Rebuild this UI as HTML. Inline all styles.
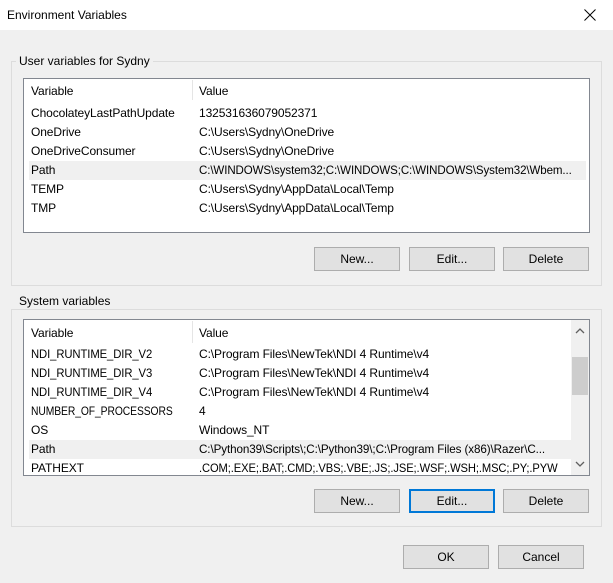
<!DOCTYPE html>
<html><head><style>
*{margin:0;padding:0;box-sizing:border-box}
body{width:613px;height:583px;background:#f0f0f0;font-family:"Liberation Sans",sans-serif;font-size:12px;color:#000;position:relative;overflow:hidden}
.a{position:absolute}
.title{left:0;top:0;width:613px;height:30px;background:#fff}
.grp{border:1px solid #dcdcdc}
.lbl{background:#f0f0f0;padding:0 3px;line-height:16px}
.list{background:#fff;border:1px solid #828790;overflow:hidden}
.r{position:absolute;left:0;height:19px;line-height:19px;white-space:nowrap;letter-spacing:-0.1px}
.r span{position:absolute}
.btn{background:#e1e1e1;border:1px solid #adadad;text-align:center;line-height:22px}
.hl{background:#f0f0f0}
.div{position:absolute;width:1px;background:#e5e5e5}
.sq{display:inline-block;transform-origin:0 50%}
</style></head><body>
<div class="a title"></div>
<div class="a" style="left:7px;top:7px;line-height:16px">Environment Variables</div>
<svg class="a" style="left:584px;top:9px" width="12" height="12"><path d="M0.5 0.5L11.5 11.5M11.5 0.5L0.5 11.5" stroke="#000" stroke-width="1"/></svg>

<div class="a grp" style="left:11px;top:61px;width:591px;height:225px"></div>
<div class="a lbl" style="left:16px;top:53px">User variables for Sydny</div>
<div class="a list" style="left:23px;top:78px;width:567px;height:155px">
 <div class="div" style="left:168px;top:1px;height:20px"></div>
 <div class="r" style="top:3px;width:565px"><span style="left:7px">Variable</span><span style="left:175px">Value</span></div>
 <div class="r" style="top:25px;width:565px"><span style="left:7px">ChocolateyLastPathUpdate</span><span style="left:175px">132531636079052371</span></div>
 <div class="r" style="top:44px;width:565px"><span style="left:7px">OneDrive</span><span style="left:175px">C:\Users\Sydny\OneDrive</span></div>
 <div class="r" style="top:63px;width:565px"><span style="left:7px">OneDriveConsumer</span><span style="left:175px">C:\Users\Sydny\OneDrive</span></div>
 <div class="r hl" style="top:82px;left:5px;width:557px"><span style="left:2px">Path</span><span style="left:170px;width:386px;overflow:hidden"><span class="sq" style="position:static;transform:scaleX(0.96)">C:\WINDOWS\system32;C:\WINDOWS;C:\WINDOWS\System32\Wbem...</span></span></div>
 <div class="r" style="top:101px;width:565px"><span style="left:7px">TEMP</span><span style="left:175px">C:\Users\Sydny\AppData\Local\Temp</span></div>
 <div class="r" style="top:120px;width:565px"><span style="left:7px">TMP</span><span style="left:175px">C:\Users\Sydny\AppData\Local\Temp</span></div>
</div>
<div class="a btn" style="left:314px;top:247px;width:86px;height:24px">New...</div>
<div class="a btn" style="left:409px;top:247px;width:86px;height:24px">Edit...</div>
<div class="a btn" style="left:503px;top:247px;width:86px;height:24px">Delete</div>

<div class="a grp" style="left:11px;top:309px;width:591px;height:218px"></div>
<div class="a lbl" style="left:16px;top:293px">System variables</div>
<div class="a list" style="left:23px;top:319px;width:567px;height:157px">
 <div class="div" style="left:168px;top:1px;height:22px"></div>
 <div class="r" style="top:4px;width:546px"><span style="left:7px">Variable</span><span style="left:175px">Value</span></div>
 <div class="r" style="top:25px;width:546px"><span style="left:7px"><span class="sq" style="position:static;transform:scaleX(0.94)">NDI_RUNTIME_DIR_V2</span></span><span style="left:175px">C:\Program Files\NewTek\NDI 4 Runtime\v4</span></div>
 <div class="r" style="top:44px;width:546px"><span style="left:7px"><span class="sq" style="position:static;transform:scaleX(0.94)">NDI_RUNTIME_DIR_V3</span></span><span style="left:175px">C:\Program Files\NewTek\NDI 4 Runtime\v4</span></div>
 <div class="r" style="top:63px;width:546px"><span style="left:7px"><span class="sq" style="position:static;transform:scaleX(0.94)">NDI_RUNTIME_DIR_V4</span></span><span style="left:175px">C:\Program Files\NewTek\NDI 4 Runtime\v4</span></div>
 <div class="r" style="top:82px;width:546px"><span style="left:7px"><span class="sq" style="position:static;transform:scaleX(0.86)">NUMBER_OF_PROCESSORS</span></span><span style="left:175px">4</span></div>
 <div class="r" style="top:101px;width:546px"><span style="left:7px">OS</span><span style="left:175px">Windows_NT</span></div>
 <div class="r hl" style="top:120px;left:5px;width:542px"><span style="left:2px">Path</span><span style="left:170px;width:370px;overflow:hidden"><span class="sq" style="position:static;transform:scaleX(0.97)">C:\Python39\Scripts\;C:\Python39\;C:\Program Files (x86)\Razer\C...</span></span></div>
 <div class="r" style="top:139px;width:546px"><span style="left:175px;width:370px;overflow:hidden"><span class="sq" style="position:static;transform:scaleX(0.93)">.COM;.EXE;.BAT;.CMD;.VBS;.VBE;.JS;.JSE;.WSF;.WSH;.MSC;.PY;.PYW</span></span><span style="left:7px">PATHEXT</span></div>
 <div class="a" style="left:547px;top:0;width:18px;height:155px;background:#f0f0f0"></div>
 <div class="a" style="left:548px;top:37px;width:16px;height:38px;background:#cdcdcd"></div>
 <svg class="a" style="left:551px;top:8px" width="10" height="6"><path d="M1 5L5 1L9 5" stroke="#606060" stroke-width="1.3" fill="none"/></svg>
 <svg class="a" style="left:551px;top:141px" width="10" height="6"><path d="M1 1L5 5L9 1" stroke="#606060" stroke-width="1.3" fill="none"/></svg>
</div>
<div class="a btn" style="left:314px;top:489px;width:86px;height:24px">New...</div>
<div class="a btn" style="left:409px;top:489px;width:86px;height:24px;border:2px solid #0078d7;line-height:20px">Edit...</div>
<div class="a btn" style="left:503px;top:489px;width:86px;height:24px">Delete</div>

<div class="a btn" style="left:403px;top:545px;width:86px;height:24px">OK</div>
<div class="a btn" style="left:498px;top:545px;width:86px;height:24px">Cancel</div>
</body></html>
